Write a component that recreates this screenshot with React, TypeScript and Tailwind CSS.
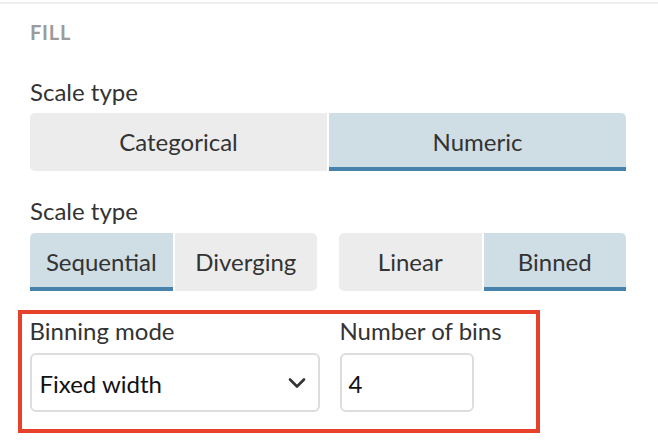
const blue = "bg-[#cfdde4] border-b-4 border-[#4682ab]";
const gray = "bg-[#ececec] border-b-4 border-transparent";

type Seg = { label: string; active: boolean; round: string };

const Segmented = ({ items }: { items: Seg[] }) => (
  <div className="flex gap-[2px]">
    {items.map((it) => (
      <button
        key={it.label}
        className={`flex-1 h-[58px] flex items-center justify-center text-[24px] leading-[30px] text-[#333] ${it.active ? blue : gray} ${it.round}`}
      >
        <span className="pt-[4px]">{it.label}</span>
      </button>
    ))}
  </div>
);

export default function App() {
  return (
    <div className="w-[658px] h-[444px] bg-white pt-[2px] font-['Lato',sans-serif] overflow-hidden">
      <div className="border-t-2 border-[#eeeeee]" />
      <div className="pl-[30px] w-[626px]">
        <div className="mt-[18px] text-[20px] leading-[20px] font-bold tracking-[0.8px] text-[#9b9b9b]">FILL</div>

        <div className="mt-[35px] text-[24px] leading-[30px] text-[#333]">Scale type</div>
        <div className="mt-[6px]">
          <Segmented
            items={[
              { label: "Categorical", active: false, round: "rounded-l-[5px]" },
              { label: "Numeric", active: true, round: "rounded-tr-[5px]" },
            ]}
          />
        </div>

        <div className="mt-[25px] text-[24px] leading-[30px] text-[#333]">Scale type</div>
        <div className="mt-[7px] grid grid-cols-2 gap-[22px]">
          <Segmented
            items={[
              { label: "Sequential", active: true, round: "rounded-tl-[5px]" },
              { label: "Diverging", active: false, round: "rounded-r-[5px]" },
            ]}
          />
          <Segmented
            items={[
              { label: "Linear", active: false, round: "rounded-l-[5px]" },
              { label: "Binned", active: true, round: "rounded-tr-[5px]" },
            ]}
          />
        </div>
      </div>

      <div className="ml-[18px] mt-[19px] w-[522px] h-[123px] border-[4.5px] border-[#e8412b] pl-[7.5px] pt-[2px]">
        <div className="flex gap-[20px]">
          <div className="w-[290px]">
            <div className="text-[24px] leading-[30px] text-[#333]">Binning mode</div>
            <div className="mt-[7px] h-[59px] rounded-[6px] border-2 border-[#dddddd] flex items-center justify-between pl-[8px] pr-[11px]">
              <span className="text-[24px] leading-[30px] text-[#111] pt-[2px]">Fixed width</span>
              <svg width="20" height="14" viewBox="0 0 20 14" fill="none">
                <path d="M3 3.5 L10 10.5 L17 3.5" stroke="#333" strokeWidth="2.6" strokeLinecap="round" strokeLinejoin="round" />
              </svg>
            </div>
          </div>
          <div className="w-[134px]">
            <div className="text-[24px] leading-[30px] text-[#333] whitespace-nowrap">Number of bins</div>
            <div className="mt-[7px] h-[59px] rounded-[6px] border-2 border-[#dddddd] flex items-center pl-[7px]">
              <span className="text-[24px] leading-[30px] text-[#111] pt-[2px]">4</span>
            </div>
          </div>
        </div>
      </div>
    </div>
  );
}
